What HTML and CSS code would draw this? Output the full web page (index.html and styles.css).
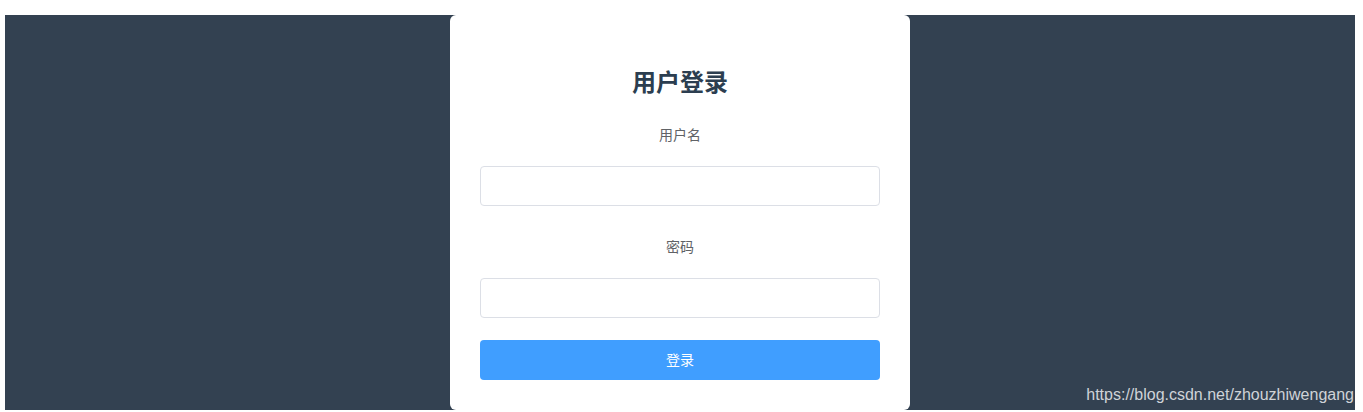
FILE: index.html
```html
<!DOCTYPE html>
<html lang="zh">
<head>
<meta charset="utf-8">
<title>用户登录</title>
<link rel="stylesheet" href="styles.css">
</head>
<body>
<div class="page">
  <div class="panel">
    <form class="card">
      <h1 class="title">用户登录</h1>
      <div class="field">
        <label class="label">用户名</label>
        <input class="input" type="text">
      </div>
      <div class="field">
        <label class="label">密码</label>
        <input class="input" type="password">
      </div>
      <button class="btn" type="button">登录</button>
    </form>
    <div class="watermark">https://blog.csdn.net/zhouzhiwengang</div>
  </div>
</div>
</body>
</html>
```

FILE: styles.css
```css
html, body {
  margin: 0;
  padding: 0;
  background: #ffffff;
}
body {
  font-family: "Noto Sans CJK SC", "Liberation Sans", sans-serif;
}
.page {
  padding: 15px 8px 2px 5px;
  height: 412px;
  box-sizing: border-box;
}
.panel {
  position: relative;
  background: #334151;
  height: 395px;
  display: flex;
  justify-content: center;
}
.card {
  width: 460px;
  box-sizing: border-box;
  background: #ffffff;
  border-radius: 6px;
  padding: 50px 30px 0;
  display: flex;
  flex-direction: column;
}
.title {
  margin: 0 0 19px;
  font-size: 24px;
  line-height: 32px;
  font-weight: 700;
  text-align: center;
  color: #2c3e50;
}
.field {
  display: flex;
  flex-direction: column;
  margin-bottom: 22px;
}
.label {
  display: block;
  text-align: center;
  font-size: 14px;
  line-height: 36px;
  color: #606266;
  margin-bottom: 14px;
}
.input {
  display: block;
  height: 40px;
  box-sizing: border-box;
  border: 1px solid #dcdfe6;
  border-radius: 4px;
  padding: 0 15px;
  font-size: 14px;
  outline: none;
  background: #fff;
}
.btn {
  height: 40px;
  border: none;
  border-radius: 4px;
  background: #409eff;
  color: #ffffff;
  font-size: 14px;
  font-family: "Noto Sans CJK SC", "Liberation Sans", sans-serif;
  padding: 0 0 2px;
  cursor: pointer;
}
.watermark {
  position: absolute;
  right: 1px;
  bottom: 6px;
  font-family: "Liberation Sans", Arial, sans-serif;
  font-size: 16px;
  line-height: 18px;
  color: #cfd3d8;
}
```
